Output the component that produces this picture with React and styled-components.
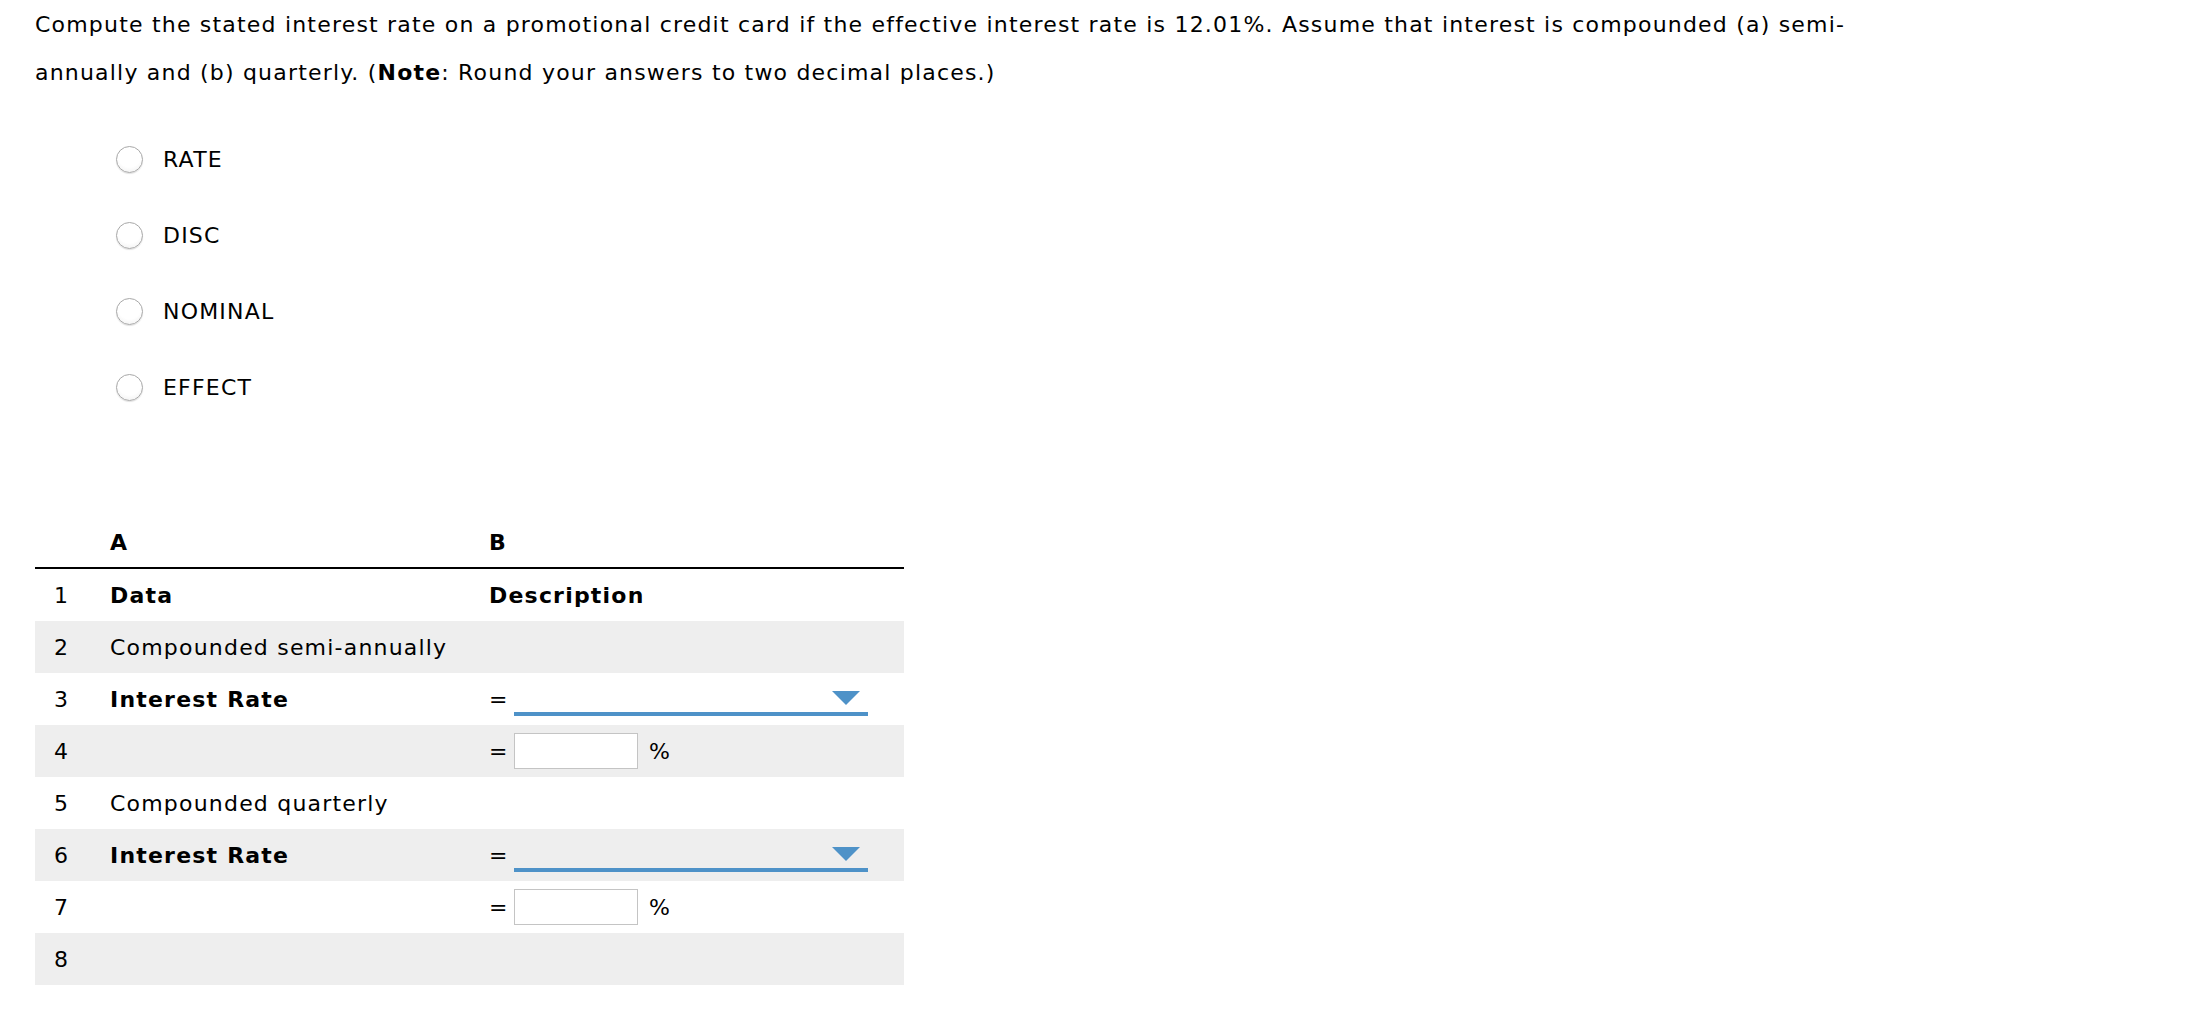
import React from 'react';
import styled, { createGlobalStyle } from 'styled-components';

const GlobalStyle = createGlobalStyle`
    body {
        margin: 0;
        background: #fff;
        color: #000;
        font-family: "DejaVu Sans", Verdana, sans-serif;
    }
`;

const Page = styled.div`
    padding: 1px 0 0 35px;
`;

const Question = styled.p`
    margin: 0;
    font-size: 22px;
    letter-spacing: 1.2px;
    line-height: 48px;
    width: 1860px;
`;

const Options = styled.div`
    margin: 24px 0 0 81px;
`;

const Option = styled.label`
    display: flex;
    align-items: center;
    height: 76px;
    font-size: 22px;
    letter-spacing: 1.2px;
`;

const Radio = styled.span`
    width: 25px;
    height: 25px;
    border-radius: 50%;
    border: 1px solid #a8a8a8;
    background: radial-gradient(circle at 50% 35%, #ffffff 55%, #ececec 100%);
    box-shadow: 0 1px 1px rgba(0, 0, 0, 0.12);
    margin-right: 20px;
`;

const Table = styled.div`
    margin-top: 92px;
    width: 869px;
`;

const Row = styled.div`
    display: grid;
    grid-template-columns: 75px 379px 1fr;
    align-items: center;
    height: ${p => (p.$head ? 50 : 52)}px;
    background: ${p => (p.$shade ? '#eeeeee' : 'transparent')};
    border-bottom: ${p => (p.$head ? '2px solid #000' : 'none')};
    font-size: 22px;
    letter-spacing: 1.2px;
`;

const Num = styled.span`
    padding-left: 19px;
`;

const Cell = styled.span`
    font-weight: ${p => (p.$bold ? 700 : 400)};
    display: flex;
    align-items: center;
`;

const Eq = styled.span`
    width: 25px;
    font-weight: 400;
`;

const Select = styled.span`
    position: relative;
    display: block;
    width: 354px;
    height: 30px;
    border-bottom: 4px solid #4e92c8;
`;

const Caret = styled.svg`
    position: absolute;
    right: 8px;
    top: 9px;
`;

const Input = styled.span`
    display: block;
    width: 122px;
    height: 34px;
    border: 1px solid #c4c4c4;
    background: #fff;
    margin-right: 11px;
`;

const rows = [
    { n: 1, a: 'Data', b: 'Description', bold: true },
    { n: 2, a: 'Compounded semi-annually' },
    { n: 3, a: 'Interest Rate', bold: true, kind: 'select' },
    { n: 4, kind: 'input' },
    { n: 5, a: 'Compounded quarterly' },
    { n: 6, a: 'Interest Rate', bold: true, kind: 'select' },
    { n: 7, kind: 'input' },
    { n: 8 },
];

const Dropdown = () => (
    <Select>
        <Caret width="28" height="14" viewBox="0 0 28 14">
            <path d="M0 0 H28 L14 14 Z" fill="#4e92c8" />
        </Caret>
    </Select>
);

export default function App() {
    return (
        <Page>
            <GlobalStyle />
            <Question>
                Compute the stated interest rate on a promotional credit card if the effective interest rate is 12.01%. Assume that interest is compounded (a) semi-annually and (b) quarterly. (<b>Note</b>: Round your answers to two decimal places.)
            </Question>

            <Options>
                {['RATE', 'DISC', 'NOMINAL', 'EFFECT'].map(o => (
                    <Option key={o}><Radio />{o}</Option>
                ))}
            </Options>

            <Table>
                <Row $head>
                    <span />
                    <Cell $bold>A</Cell>
                    <Cell $bold>B</Cell>
                </Row>
                {rows.map(r => (
                    <Row key={r.n} $shade={r.n % 2 === 0}>
                        <Num>{r.n}</Num>
                        <Cell $bold={r.bold}>{r.a}</Cell>
                        <Cell $bold={r.bold}>
                            {r.b}
                            {r.kind && <Eq>=</Eq>}
                            {r.kind === 'select' && <Dropdown />}
                            {r.kind === 'input' && <><Input />%</>}
                        </Cell>
                    </Row>
                ))}
            </Table>
        </Page>
    );
}
